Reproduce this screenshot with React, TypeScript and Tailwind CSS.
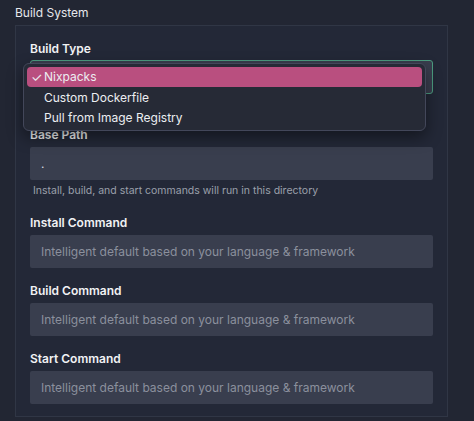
import React from 'react';

const font = { fontFamily: 'Inter, "Noto Sans", sans-serif' };

function Field({ label, value, placeholder, className = '' }: { label: string; value?: string; placeholder?: string; className?: string }) {
  return (
    <div className={className}>
      <div className="h-[16px] leading-[16px] text-[12px] font-semibold text-[#f1f2f4]">{label}</div>
      <div className="mt-[4px] h-[33px] rounded-[2px] bg-[#393e4e] px-[11px] flex items-center text-[12px]">
        {value ? (
          <span className="text-[#d9dce2]">{value}</span>
        ) : (
          <span className="text-[#8b909d]">{placeholder}</span>
        )}
      </div>
    </div>
  );
}

export default function App() {
  const placeholder = 'Intelligent default based on your language & framework';
  return (
    <div className="h-[421px] w-[474px] overflow-hidden bg-[#222633] pt-[5px] px-[15px] relative" style={font}>
      <div className="h-[16px] leading-[16px] text-[12px] text-[#e6e8ec]">Build System</div>

      <div className="mt-[4px] w-[433px] border border-[#303645] bg-[#232837] px-[14px] pt-[15px] pb-[12px]">
        {/* Build Type select */}
        <div className="h-[16px] leading-[16px] text-[12px] font-semibold text-[#f1f2f4]">Build Type</div>
        <div className="mt-[3px] h-[34px] rounded-[3px] border-[1.5px] border-[#4c9d80] bg-[#393e4e]" />

        <Field label="Base Path" value="." className="mt-[33px]" />
        <div className="mt-[4px] ml-[3px] h-[14px] leading-[14px] text-[10.5px] text-[#9ba0ab]">
          Install, build, and start commands will run in this directory
        </div>

        <Field label="Install Command" placeholder={placeholder} className="mt-[17px]" />
        <Field label="Build Command" placeholder={placeholder} className="mt-[15px]" />
        <Field label="Start Command" placeholder={placeholder} className="mt-[15px]" />
      </div>

      {/* open dropdown menu */}
      <div className="absolute left-[23px] top-[63px] w-[403px] h-[68px] rounded-[6px] border border-[#43475a] bg-[#262a36] p-[3px] shadow-[0_6px_16px_rgba(0,0,0,0.45)] text-[12px] text-[#eceef1]">
        <div className="h-[20px] rounded-[4px] bg-[#b94f7f] flex items-center pl-[4px]">
          <span className="w-[13px] text-[13px] leading-none">✓</span>
          <span>Nixpacks</span>
        </div>
        <div className="h-[21px] flex items-center pl-[17px]">Custom Dockerfile</div>
        <div className="h-[20px] flex items-center pl-[17px]">Pull from Image Registry</div>
      </div>
    </div>
  );
}
